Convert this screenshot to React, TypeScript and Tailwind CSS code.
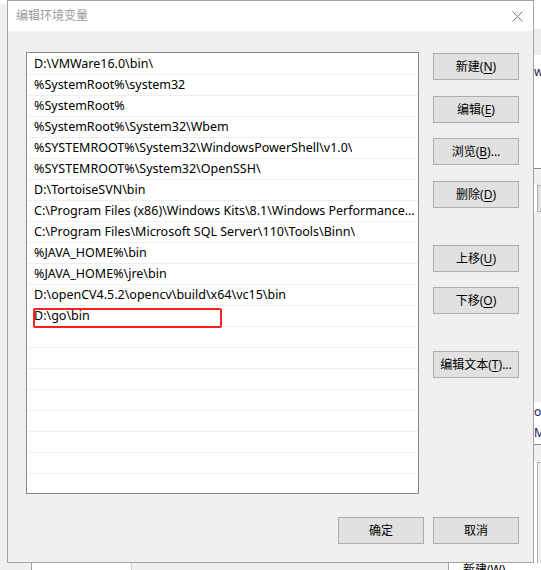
import React from 'react';

const paths = [
  'D:\\VMWare16.0\\bin\\',
  '%SystemRoot%\\system32',
  '%SystemRoot%',
  '%SystemRoot%\\System32\\Wbem',
  '%SYSTEMROOT%\\System32\\WindowsPowerShell\\v1.0\\',
  '%SYSTEMROOT%\\System32\\OpenSSH\\',
  'D:\\TortoiseSVN\\bin',
  'C:\\Program Files (x86)\\Windows Kits\\8.1\\Windows Performance Toolkit\\',
  'C:\\Program Files\\Microsoft SQL Server\\110\\Tools\\Binn\\',
  '%JAVA_HOME%\\bin',
  '%JAVA_HOME%\\jre\\bin',
  'D:\\openCV4.5.2\\opencv\\build\\x64\\vc15\\bin',
  'D:\\go\\bin',
];

const rows = [...paths, ...Array(8).fill('')];

function WinButton({
  label,
  hotkey,
  suffix = '',
  className = '',
}: {
  label: string;
  hotkey?: string;
  suffix?: string;
  className?: string;
}) {
  return (
    <button
      className={`w-[86px] h-[27px] shrink-0 bg-[#e1e1e1] border border-[#adadad] text-[12px] text-black flex items-center justify-center leading-none ${className}`}
    >
      <span>
        {label}
        {hotkey && (
          <>
            (<span className="underline underline-offset-2">{hotkey}</span>)
          </>
        )}
        {suffix}
      </span>
    </button>
  );
}

export default function App() {
  return (
    <div
      className="w-[541px] h-[570px] overflow-hidden bg-[#f3f3f3] flex flex-col"
      style={{ fontFamily: '"Noto Sans", "Noto Sans CJK SC", sans-serif' }}
    >
      <div className="flex h-[563px]">
        {/* left background strip */}
        <div className="w-[7px] flex flex-col">
          <div className="h-[4px] bg-white" />
          <div className="flex-1 bg-[#f0f0f0]" />
        </div>

        {/* dialog */}
        <div className="w-[527px] h-[563px] border border-[#a3a3a3] flex flex-col bg-[#f0f0f0]">
          {/* title bar */}
          <div className="h-[30px] bg-white flex items-center justify-between pl-2 pr-[9px]">
            <span className="text-[12px] text-[#9b9b9b]">编辑环境变量</span>
            <svg width="11" height="11" viewBox="0 0 11 11" className="mr-[1px]">
              <path d="M0.5 0.5 L10.5 10.5 M10.5 0.5 L0.5 10.5" stroke="#7a7a7a" strokeWidth="1" fill="none" />
            </svg>
          </div>

          {/* body */}
          <div className="flex-1 flex flex-col pl-[18px] pr-[14px] pt-[21px] pb-[18px]">
            <div className="flex gap-[14px]">
              {/* list */}
              <div className="relative w-[393px] h-[442px] border border-[#828790] bg-white overflow-hidden pt-[1px]">
                {rows.map((p, i) => (
                  <div
                    key={i}
                    className="h-[21px] border-b border-[#efefef] flex items-center pl-[7px] pr-[1px] text-[12.5px] text-black"
                  >
                    <span className="truncate">{p}</span>
                  </div>
                ))}
                {/* annotation */}
                <div className="absolute left-[6px] top-[255px] w-[189px] h-[20px] border-2 border-[#ff1f1f] rounded-[2px]" />
              </div>

              {/* side buttons */}
              <div className="flex flex-col">
                <WinButton label="新建" hotkey="N" className="mt-[1px]" />
                <WinButton label="编辑" hotkey="E" className="mt-[16px]" />
                <WinButton label="浏览" hotkey="B" suffix="..." className="mt-[15px]" />
                <WinButton label="删除" hotkey="D" className="mt-[16px]" />
                <WinButton label="上移" hotkey="U" className="mt-[37px]" />
                <WinButton label="下移" hotkey="O" className="mt-[15px]" />
                <WinButton label="编辑文本" hotkey="T" suffix="..." className="mt-[37px]" />
              </div>
            </div>

            <div className="mt-[23px] flex justify-end gap-[9px]">
              <WinButton label="确定" />
              <WinButton label="取消" />
            </div>
          </div>
        </div>

        {/* right background strip (window behind) */}
        <div className="w-[7px] flex flex-col bg-white overflow-hidden">
          <div className="h-[29px] bg-white" />
          <div className="h-[26px] bg-[#ececec]" />
          <div className="h-[113px] bg-white text-[12px] text-[#1a1a4a] leading-none pt-[11px] whitespace-nowrap">ws</div>
          <div className="h-[1px] bg-[#8a8a8a]" />
          <div className="h-[16px] bg-[#f0f0f0]" />
          <div className="h-[27px] bg-[#e1e1e1] border-l border-y border-[#adadad] ml-[3px]" />
          <div className="h-[190px] bg-[#f0f0f0]" />
          <div className="h-[22px] bg-white text-[12px] text-[#102060] leading-none pt-[4px] whitespace-nowrap">o</div>
          <div className="h-[20px] bg-white text-[12px] text-[#102060] leading-none pt-[3px] whitespace-nowrap">M</div>
          <div className="h-[1px] bg-[#8a8a8a]" />
          <div className="h-[17px] bg-[#f0f0f0]" />
          <div className="flex-1 bg-[#f0f0f0] border-l border-t border-[#adadad] ml-[3px]" />
        </div>
      </div>

      {/* bottom background strip */}
      <div className="flex-1 flex bg-[#f0f0f0]">
        <div className="w-[31px]" />
        <div className="w-[100px] border-l border-[#a0a0a0] bg-white" />
        <div className="w-[317px] border-l border-[#d0d0d0]" />
        <div className="flex-1 border-l border-[#a0a0a0] bg-white text-[12px] leading-none pl-[14px] pt-[1px] overflow-hidden whitespace-nowrap">
          新建(W)...
        </div>
      </div>
    </div>
  );
}
